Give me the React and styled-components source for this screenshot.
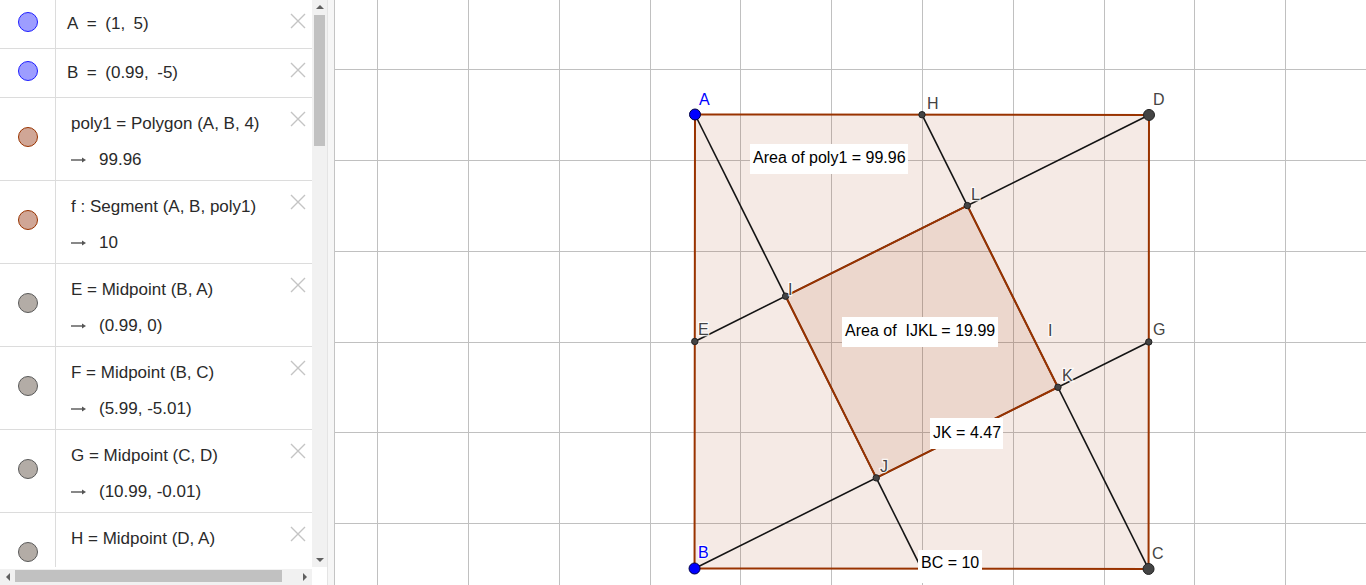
import React from 'react';
import styled, { createGlobalStyle } from 'styled-components';

const GlobalStyle = createGlobalStyle`
  html, body {
    margin: 0;
    padding: 0;
    background: #fff;
    overflow: hidden;
  }
  * {
    box-sizing: border-box;
  }
`;

// algebra view entries (en spaces mimic the math operator spacing)
const rows = [
  { kind: 'point', def: 'A\u2002=\u2002(1,\u20025)' },
  { kind: 'point', def: 'B\u2002=\u2002(0.99,\u2002-5)' },
  { kind: 'poly', def: 'poly1 = Polygon (A, B, 4)', value: '99.96' },
  { kind: 'poly', def: 'f : Segment (A, B, poly1)', value: '10' },
  { kind: 'aux', def: 'E = Midpoint (B, A)', value: '(0.99, 0)' },
  { kind: 'aux', def: 'F = Midpoint (B, C)', value: '(5.99, -5.01)' },
  { kind: 'aux', def: 'G = Midpoint (C, D)', value: '(10.99, -0.01)' },
  { kind: 'aux', def: 'H = Midpoint (D, A)', value: '(6, 4.99)' },
];

const marbleColors = {
  point: { fill: '#9d9dff', edge: '#1f1fff' },
  poly: { fill: '#d0a696', edge: '#993300' },
  aux: { fill: '#b3aca6', edge: '#595959' },
};

// graphics view: world -> screen
const X0 = 649.6;
const Y0 = 341.5;
const U = 45.4;
const toPx = ([x, y]) => [X0 + U * x, Y0 - U * y];
const mid = (p, q) => [(p[0] + q[0]) / 2, (p[1] + q[1]) / 2];
const cross = (p1, p2, p3, p4) => {
  const d = (p1[0] - p2[0]) * (p3[1] - p4[1]) - (p1[1] - p2[1]) * (p3[0] - p4[0]);
  const t = ((p1[0] - p3[0]) * (p3[1] - p4[1]) - (p1[1] - p3[1]) * (p3[0] - p4[0])) / d;
  return [p1[0] + t * (p2[0] - p1[0]), p1[1] + t * (p2[1] - p1[1])];
};

const A = toPx([1, 5]);
const B = toPx([0.99, -5]);
const C = toPx([10.99, -5.01]);
const D = toPx([11, 4.99]);
const E = mid(A, B);
const F = mid(B, C);
const G = mid(C, D);
const H = mid(D, A);
const I = cross(A, F, D, E);
const J = cross(A, F, B, G);
const K = cross(H, C, B, G);
const L = cross(H, C, D, E);

const pts = (list) => list.map((p) => p.join(',')).join(' ');

const vLines = [-3, -2, -1, 0, 1, 2, 3, 4, 5, 6, 7].map((k) => Math.round(X0 + 90.8 * k) + 0.5);
const hLines = [-3, -2, -1, 0, 1, 2].map((k) => Math.round(Y0 + 90.8 * k) + 0.5);

const pointLabels = [
  { t: 'A', x: 699, y: 105, blue: true },
  { t: 'H', x: 927, y: 109 },
  { t: 'D', x: 1153, y: 105 },
  { t: 'L', x: 971, y: 200 },
  { t: 'I', x: 788, y: 295 },
  { t: 'E', x: 698, y: 335 },
  { t: 'G', x: 1153, y: 335 },
  { t: 'K', x: 1062, y: 381 },
  { t: 'J', x: 880, y: 472 },
  { t: 'B', x: 698, y: 558, blue: true },
  { t: 'C', x: 1152, y: 559 },
];

const valueBoxes = [
  { t: 'Area of poly1 = 99.96', x: 750, y: 144, w: 158, h: 30, by: 163 },
  { t: 'Area of  IJKL = 19.99', x: 842, y: 317, w: 156, h: 30, by: 336 },
  { t: 'JK = 4.47', x: 930, y: 418, w: 73, h: 31, by: 438 },
  { t: 'BC = 10', x: 918, y: 550, w: 64, h: 33, by: 568 },
];

const Shell = styled.div`
  display: flex;
  width: 1366px;
  height: 585px;
  overflow: hidden;
`;

const AlgebraPane = styled.div`
  display: grid;
  grid-template-columns: 312px 15px;
  grid-template-rows: 567px 18px;
  flex: none;
  font-family: "Liberation Sans", Arial, sans-serif;
  color: #2a2a2a;
`;

const List = styled.div`
  overflow: hidden;
`;

const Row = styled.div`
  display: grid;
  grid-template-columns: 56px 1fr 22px;
  height: ${(p) => (p.$double ? 83 : 49)}px;
  border-bottom: 1px solid #dcdcdc;
  flex: none;
`;

const MarbleCell = styled.div`
  display: flex;
  align-items: center;
  justify-content: center;
  padding-bottom: 4px;
  border-right: 1px solid #dcdcdc;
`;

const Marble = styled.span`
  width: 20px;
  height: 20px;
  border-radius: 50%;
  background: ${(p) => marbleColors[p.$kind].fill};
  border: 1px solid ${(p) => marbleColors[p.$kind].edge};
`;

const Content = styled.div`
  padding: ${(p) => (p.$double ? '8px 0 0 15px' : '6px 0 0 11px')};
  font-size: 17px;
  line-height: 36px;
  white-space: pre;
  overflow: hidden;
`;

const Line = styled.div`
  display: flex;
  align-items: center;
  height: 36px;
`;

const Value = styled.span`
  margin-left: 13px;
`;

const CloseCell = styled.div`
  padding-top: 13px;
`;

const VScroll = styled.div`
  display: flex;
  flex-direction: column;
  background: #f1f1f1;
`;

const ArrowBtn = styled.div`
  flex: none;
  width: 15px;
  height: 15px;
  display: flex;
  align-items: center;
  justify-content: center;

  &::after {
    content: '';
    border: 4px solid transparent;
    ${(p) => p.$dir === 'up' && 'border-bottom-color: #606060; border-top-width: 0; margin-top: -1px;'}
    ${(p) => p.$dir === 'down' && 'border-top-color: #606060; border-bottom-width: 0;'}
    ${(p) => p.$dir === 'left' && 'border-right-color: #606060; border-left-width: 0;'}
    ${(p) => p.$dir === 'right' && 'border-left-color: #606060; border-right-width: 0;'}
  }
`;

const VTrack = styled.div`
  flex: 1;
  padding: 0 2px;
`;

const VThumb = styled.div`
  height: 131px;
  background: #c1c1c1;
`;

const HScroll = styled.div`
  display: flex;
  height: 16px;
  margin-top: 2px;
  background: #f1f1f1;
`;

const HTrack = styled.div`
  flex: 1;
  padding: 1px 0;
`;

const HThumb = styled.div`
  width: 267px;
  height: 12px;
  background: #c1c1c1;
`;

const Corner = styled.div`
  background: #fff;
`;

const Splitter = styled.div`
  flex: none;
  width: 8px;
  background: #f6f6f6;
  border-left: 1px solid #e4e4e4;
  border-right: 1px solid #c4c4c4;
`;

const Graphics = styled.div`
  flex: 1;
  background: #fff;
`;

const Canvas = styled.svg`
  display: block;
  font-family: "Liberation Sans", Arial, sans-serif;
  font-size: 16px;
`;

const GridLine = styled.line`
  stroke: #c0c0c0;
  stroke-width: 1;
`;

const PolyShape = styled.polygon`
  fill: rgba(153, 51, 0, 0.1);
  stroke: #993300;
  stroke-width: 2;
  stroke-linejoin: round;
`;

const Seg = styled.line`
  stroke: #141414;
  stroke-width: 1.6;
`;

const Dot = styled.circle`
  fill: ${(p) => (p.$blue ? '#0000ff' : '#444')};
  stroke: ${(p) => (p.$blue ? '#000040' : '#222')};
  stroke-width: 1;
`;

const PointName = styled.text`
  fill: ${(p) => (p.$blue ? '#0000ff' : '#444')};
  stroke: #fff;
  stroke-width: 2.5;
  stroke-opacity: 0.8;
  paint-order: stroke;
`;

const BoxBg = styled.rect`
  fill: #fff;
`;

const BoxText = styled.text`
  fill: #000;
  white-space: pre;
`;

const CloseIcon = () => (
  <svg width="16" height="16" viewBox="0 0 16 16">
    <path d="M1 1 L15 15 M15 1 L1 15" stroke="#c4c4c4" strokeWidth="1.4" fill="none" />
  </svg>
);

const ResultArrow = () => (
  <svg width="15" height="8" viewBox="0 0 15 8">
    <path d="M0 4 H12" stroke="#555" strokeWidth="1.4" />
    <path d="M11 1.5 L15 4 L11 6.5 Z" fill="#555" />
  </svg>
);

export default function App() {
  return (
    <>
      <GlobalStyle />
      <Shell>
        <AlgebraPane>
          <List>
            {rows.map((r) => (
              <Row key={r.def} $double={!!r.value}>
                <MarbleCell>
                  <Marble $kind={r.kind} />
                </MarbleCell>
                <Content $double={!!r.value}>
                  <Line>{r.def}</Line>
                  {r.value && (
                    <Line>
                      <ResultArrow />
                      <Value>{r.value}</Value>
                    </Line>
                  )}
                </Content>
                <CloseCell>
                  <CloseIcon />
                </CloseCell>
              </Row>
            ))}
          </List>
          <VScroll>
            <ArrowBtn $dir="up" />
            <VTrack>
              <VThumb />
            </VTrack>
            <ArrowBtn $dir="down" />
          </VScroll>
          <HScroll>
            <ArrowBtn $dir="left" />
            <HTrack>
              <HThumb />
            </HTrack>
            <ArrowBtn $dir="right" />
          </HScroll>
          <Corner />
        </AlgebraPane>
        <Splitter />
        <Graphics>
          <Canvas width="1031" height="585" viewBox="335 0 1031 585">
            {vLines.map((x) => (
              <GridLine key={'v' + x} x1={x} y1={0} x2={x} y2={585} />
            ))}
            {hLines.map((y) => (
              <GridLine key={'h' + y} x1={335} y1={y} x2={1366} y2={y} />
            ))}
            <PolyShape points={pts([A, B, C, D])} />
            <Seg x1={A[0]} y1={A[1]} x2={F[0]} y2={F[1]} />
            <Seg x1={H[0]} y1={H[1]} x2={C[0]} y2={C[1]} />
            <Seg x1={D[0]} y1={D[1]} x2={E[0]} y2={E[1]} />
            <Seg x1={B[0]} y1={B[1]} x2={G[0]} y2={G[1]} />
            <PolyShape points={pts([I, J, K, L])} />
            {[E, F, G, H, I, J, K, L].map((p, i) => (
              <Dot key={i} cx={p[0]} cy={p[1]} r={3.2} />
            ))}
            <Dot cx={C[0]} cy={C[1]} r={5.5} />
            <Dot cx={D[0]} cy={D[1]} r={5.5} />
            <Dot $blue cx={A[0]} cy={A[1]} r={5.5} />
            <Dot $blue cx={B[0]} cy={B[1]} r={5.5} />
            {pointLabels.map((l) => (
              <PointName key={l.t} x={l.x} y={l.y} $blue={l.blue}>
                {l.t}
              </PointName>
            ))}
            <PointName x={1048} y={336}>I</PointName>
            {valueBoxes.map((b) => (
              <g key={b.t}>
                <BoxBg x={b.x} y={b.y} width={b.w} height={b.h} />
                <BoxText x={b.x + 3} y={b.by}>{b.t}</BoxText>
              </g>
            ))}
          </Canvas>
        </Graphics>
      </Shell>
    </>
  );
}
